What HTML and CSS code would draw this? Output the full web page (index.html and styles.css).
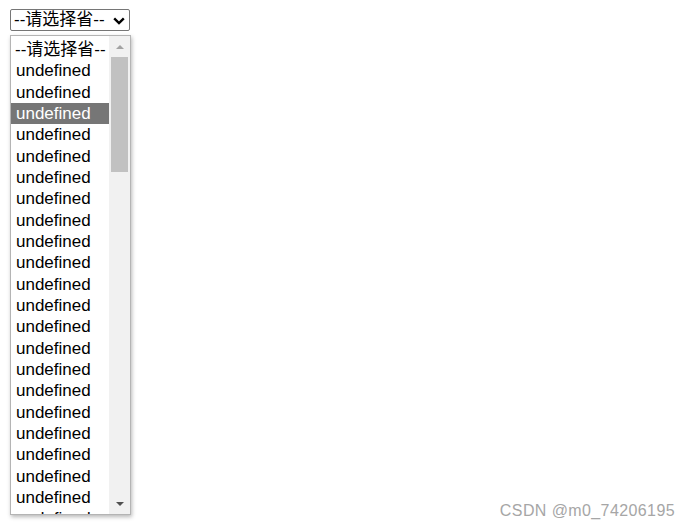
FILE: index.html
```html
<!DOCTYPE html>
<html>
<head>
<meta charset="utf-8">
<link rel="stylesheet" href="styles.css">
</head>
<body>
<div class="select">
  <span class="select-label">--请选择省--</span>
  <svg class="chev" width="12" height="8" viewBox="0 0 12 8"><path d="M1.2 1.3 L6 6 L10.8 1.3" fill="none" stroke="#000" stroke-width="2.4"/></svg>
</div>
<div class="popup">
  <div class="list">
    <div class="opt">--请选择省--</div>
    <div class="opt">undefined</div>
    <div class="opt">undefined</div>
    <div class="opt sel">undefined</div>
    <div class="opt">undefined</div>
    <div class="opt">undefined</div>
    <div class="opt">undefined</div>
    <div class="opt">undefined</div>
    <div class="opt">undefined</div>
    <div class="opt">undefined</div>
    <div class="opt">undefined</div>
    <div class="opt">undefined</div>
    <div class="opt">undefined</div>
    <div class="opt">undefined</div>
    <div class="opt">undefined</div>
    <div class="opt">undefined</div>
    <div class="opt">undefined</div>
    <div class="opt">undefined</div>
    <div class="opt">undefined</div>
    <div class="opt">undefined</div>
    <div class="opt">undefined</div>
    <div class="opt">undefined</div>
    <div class="opt">undefined</div>
    <div class="opt">undefined</div>
    <div class="opt">undefined</div>
  </div>
  <div class="scrollbar">
    <div class="arrow up"></div>
    <div class="track"><div class="thumb"></div></div>
    <div class="arrow down"></div>
  </div>
</div>
<div class="watermark">CSDN @m0_74206195</div>
</body>
</html>
```
FILE: styles.css
```css
html, body {
  margin: 0;
  padding: 0;
  background: #fff;
}
body {
  width: 690px;
  height: 529px;
  position: relative;
  overflow: hidden;
  font-family: "Liberation Sans", Arial, "Noto Sans CJK SC", sans-serif;
}
.select {
  position: absolute;
  left: 10px;
  top: 9px;
  height: 20px;
  width: 111px;
  border: 1px solid #767676;
  border-radius: 2px;
  display: flex;
  align-items: center;
  justify-content: space-between;
  padding: 0 4px 0 3px;
  box-sizing: content-box;
  font-size: 17px;
  color: #000;
}
.select-label {
  line-height: 20px;
  white-space: nowrap;
}
.chev {
  display: block;
  margin-top: 1px;
}
.popup {
  position: absolute;
  left: 10px;
  top: 35px;
  width: 119px;
  height: 478px;
  border: 1px solid #b4b4b4;
  background: #fff;
  box-shadow: 1px 2px 4px rgba(0,0,0,0.28);
  display: flex;
  overflow: hidden;
}
.list {
  width: 98px;
  padding-top: 3px;
  overflow: hidden;
}
.opt {
  height: 21.33px;
  line-height: 21.33px;
  font-size: 17px;
  padding-left: 5px;
  white-space: nowrap;
  color: #000;
}
.opt:first-child {
  padding-left: 4px;
}
.opt.sel {
  background: #767676;
  color: #fff;
}
.scrollbar {
  width: 21px;
  background: #f1f1f1;
  display: flex;
  flex-direction: column;
  align-items: center;
}
.arrow {
  height: 21px;
  width: 100%;
  display: flex;
  align-items: center;
  justify-content: center;
  flex: none;
}
.arrow::before {
  content: "";
  display: block;
  width: 0;
  height: 0;
  border-left: 4px solid transparent;
  border-right: 4px solid transparent;
}
.arrow.up::before {
  border-bottom: 4px solid #a3a3a3;
}
.arrow.down::before {
  border-top: 4px solid #505050;
}
.track {
  flex: 1;
  width: 100%;
  display: flex;
  justify-content: center;
}
.thumb {
  width: 17px;
  height: 115px;
  background: #c1c1c1;
}
.watermark {
  position: absolute;
  right: 15px;
  bottom: 9px;
  font-size: 16px;
  color: #a6a6a6;
  letter-spacing: 0.4px;
}
```
